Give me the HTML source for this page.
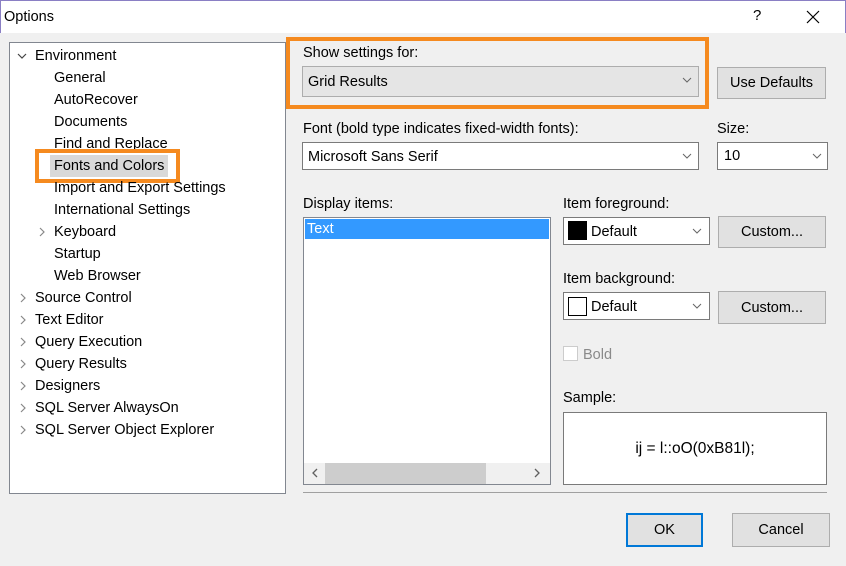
<!DOCTYPE html>
<html><head><style>
*{margin:0;padding:0;box-sizing:border-box}
body{width:846px;height:566px;background:#f0f0f0;font-family:"Liberation Sans",sans-serif;font-size:14.5px;color:#000;position:relative;overflow:hidden}
.a{position:absolute;white-space:nowrap}
.t{margin-top:1px}
.title{left:0;top:0;width:846px;height:33px;background:#fff;border-top:1px solid #8a7fc4;border-left:1px solid #8a7fc4;border-right:1px solid #8a7fc4}
.box{position:absolute;background:#fff;border:1px solid #828790}
.dd{position:absolute;background:#fff;border:1px solid #7a7a7a}
.btn{position:absolute;background:#e1e1e1;border:1px solid #adadad;text-align:center}
.or{position:absolute;border:4px solid #f58a1f}
.sw{position:absolute;width:19px;height:19px;border:1px solid #000}
</style></head><body>
<div class="a title"></div>
<div class="a" style="left:4px;top:9px;font-size:14.5px">Options</div>
<div class="a" style="left:753px;top:7px;font-size:15px">?</div>
<svg class="a" style="left:806px;top:10px" width="14" height="14"><path d="M1 1L13 13M13 1L1 13" stroke="#000" stroke-width="1.2"/></svg>

<div class="box" style="left:9px;top:42px;width:277px;height:452px"></div>
<svg class="a" style="left:17px;top:52px" width="10" height="8"><path d="M1 2L5 6L9 2" stroke="#444" fill="none" stroke-width="1.2"/></svg>
<div class="a t" style="left:35px;top:47px">Environment</div>
<div class="a t" style="left:54px;top:69px">General</div>
<div class="a t" style="left:54px;top:91px">AutoRecover</div>
<div class="a t" style="left:54px;top:113px">Documents</div>
<div class="a t" style="left:54px;top:135px">Find and Replace</div>
<div class="a" style="left:50px;top:155px;width:118px;height:22px;background:#d9d9d9"></div>
<div class="a t" style="left:54px;top:157px">Fonts and Colors</div>
<div class="or" style="left:35px;top:149px;width:145px;height:34px"></div>
<div class="a t" style="left:54px;top:179px">Import and Export Settings</div>
<div class="a t" style="left:54px;top:201px">International Settings</div>
<svg class="a" style="left:38px;top:227px" width="8" height="10"><path d="M2 1L6 5L2 9" stroke="#888" fill="none" stroke-width="1.2"/></svg>
<div class="a t" style="left:54px;top:223px">Keyboard</div>
<div class="a t" style="left:54px;top:245px">Startup</div>
<div class="a t" style="left:54px;top:267px">Web Browser</div>
<svg class="a" style="left:19px;top:293px" width="8" height="150"><g stroke="#888" fill="none" stroke-width="1.2"><path d="M2 1L6 5L2 9"/><path d="M2 23L6 27L2 31"/><path d="M2 45L6 49L2 53"/><path d="M2 67L6 71L2 75"/><path d="M2 89L6 93L2 97"/><path d="M2 111L6 115L2 119"/><path d="M2 133L6 137L2 141"/></g></svg>
<div class="a t" style="left:35px;top:289px">Source Control</div>
<div class="a t" style="left:35px;top:311px">Text Editor</div>
<div class="a t" style="left:35px;top:333px">Query Execution</div>
<div class="a t" style="left:35px;top:355px">Query Results</div>
<div class="a t" style="left:35px;top:377px">Designers</div>
<div class="a t" style="left:35px;top:399px">SQL Server AlwaysOn</div>
<div class="a t" style="left:35px;top:421px">SQL Server Object Explorer</div>

<div class="a t" style="left:303px;top:44px">Show settings for:</div>
<div class="a" style="left:302px;top:66px;width:397px;height:31px;background:#e5e5e5;border:1px solid #adadad"></div>
<div class="a t" style="left:308px;top:73px">Grid Results</div>
<svg class="a" style="left:682px;top:77px" width="10" height="7"><path d="M1 1L5 5L9 1" stroke="#666" fill="none"/></svg>
<div class="or" style="left:286px;top:37px;width:423px;height:72px"></div>
<div class="btn" style="left:717px;top:67px;width:109px;height:32px;line-height:31px">Use Defaults</div>

<div class="a t" style="left:303px;top:120px">Font (bold type indicates fixed-width fonts):</div>
<div class="dd" style="left:302px;top:142px;width:397px;height:28px"></div>
<div class="a t" style="left:308px;top:148px">Microsoft Sans Serif</div>
<svg class="a" style="left:682px;top:153px" width="10" height="7"><path d="M1 1L5 5L9 1" stroke="#666" fill="none"/></svg>
<div class="a t" style="left:717px;top:120px">Size:</div>
<div class="dd" style="left:717px;top:142px;width:111px;height:28px"></div>
<div class="a t" style="left:724px;top:147px">10</div>
<svg class="a" style="left:812px;top:153px" width="10" height="7"><path d="M1 1L5 5L9 1" stroke="#666" fill="none"/></svg>

<div class="a t" style="left:303px;top:195px">Display items:</div>
<div class="box" style="left:303px;top:217px;width:248px;height:268px"></div>
<div class="a" style="left:305px;top:219px;width:244px;height:20px;background:#3399ff;color:#fff;padding-left:2px;line-height:21px">Text</div>
<div class="a" style="left:304px;top:463px;width:246px;height:21px;background:#f0f0f0"></div>
<div class="a" style="left:325px;top:463px;width:161px;height:21px;background:#cdcdcd"></div>
<svg class="a" style="left:310px;top:467px" width="236" height="12"><g stroke="#606060" fill="none" stroke-width="1.3"><path d="M7 2L3 6L7 10"/><path d="M225 2L229 6L225 10"/></g></svg>

<div class="a t" style="left:563px;top:195px">Item foreground:</div>
<div class="dd" style="left:563px;top:217px;width:147px;height:28px"></div>
<div class="sw" style="left:568px;top:221px;background:#000"></div>
<div class="a t" style="left:591px;top:223px">Default</div>
<svg class="a" style="left:692px;top:228px" width="10" height="7"><path d="M1 1L5 5L9 1" stroke="#666" fill="none"/></svg>
<div class="btn" style="left:718px;top:216px;width:108px;height:32px;line-height:31px">Custom...</div>

<div class="a t" style="left:563px;top:270px">Item background:</div>
<div class="dd" style="left:563px;top:292px;width:147px;height:28px"></div>
<div class="sw" style="left:568px;top:297px;background:#fff"></div>
<div class="a t" style="left:591px;top:298px">Default</div>
<svg class="a" style="left:692px;top:303px" width="10" height="7"><path d="M1 1L5 5L9 1" stroke="#666" fill="none"/></svg>
<div class="btn" style="left:718px;top:291px;width:108px;height:33px;line-height:32px">Custom...</div>

<div class="a" style="left:563px;top:346px;width:15px;height:15px;border:1px solid #cccccc;background:#fff"></div>
<div class="a t" style="left:583px;top:346px;color:#8a8a8a">Bold</div>

<div class="a t" style="left:563px;top:389px">Sample:</div>
<div class="a" style="left:563px;top:412px;width:264px;height:73px;background:#fff;border:1px solid #7a7a7a;text-align:center;line-height:72px;font-size:15.5px">ij = l::oO(0xB81l);</div>

<div class="a" style="left:303px;top:492px;width:524px;height:1px;background:#a0a0a0"></div>
<div class="btn" style="left:626px;top:513px;width:77px;height:34px;line-height:31px;border:2px solid #0078d7">OK</div>
<div class="btn" style="left:732px;top:513px;width:98px;height:34px;line-height:33px">Cancel</div>
</body></html>
